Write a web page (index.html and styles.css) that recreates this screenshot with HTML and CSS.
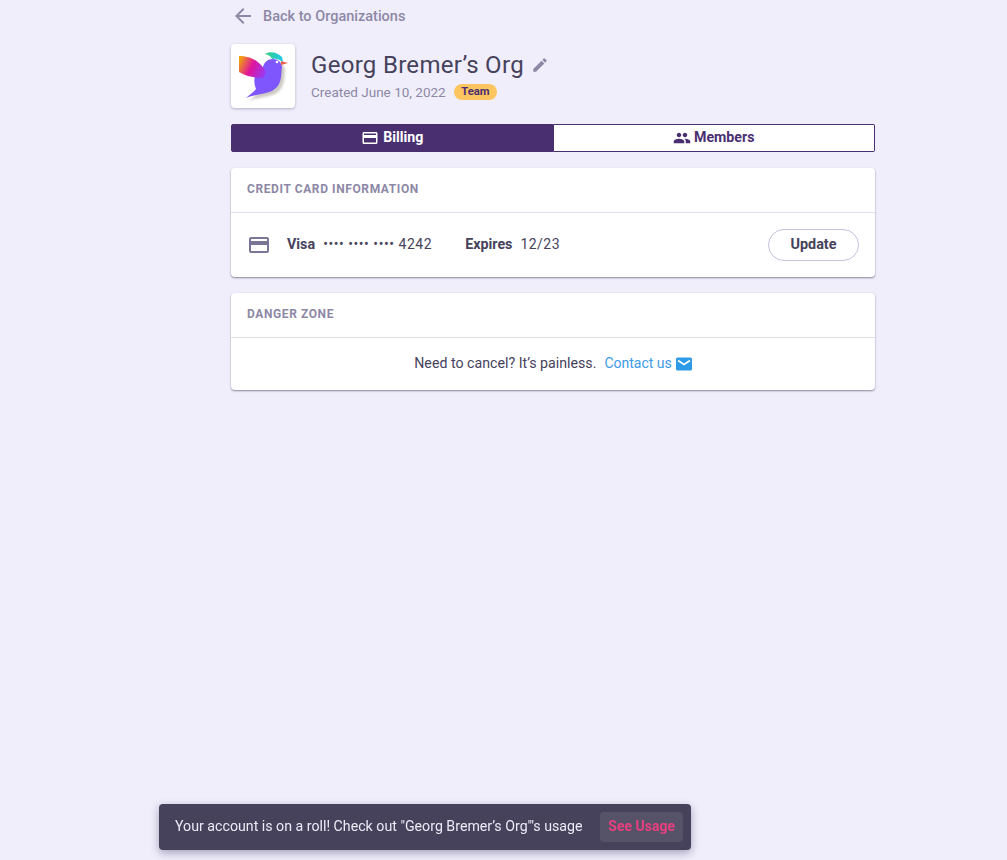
FILE: index.html
```html
<!DOCTYPE html>
<html lang="en">
<head>
    <meta charset="UTF-8">
    <title>Georg Bremer's Org</title>
    <link rel="stylesheet" href="styles.css">
</head>
<body>
    <main class="page">
        <a class="back-link" href="#">
            <svg class="back-icon" viewBox="0 0 24 24"><path d="M20 11H7.83l5.59-5.59L12 4l-8 8 8 8 1.41-1.41L7.83 13H20v-2z"/></svg>
            <span class="back-text">Back to Organizations</span>
        </a>

        <div class="org-header">
            <div class="org-logo">
                <svg viewBox="0 0 64 64" width="64" height="64">
                    <defs>
                        <linearGradient id="wing" x1="0" y1="0.2" x2="1" y2="0.6">
                            <stop offset="0" stop-color="#f2a20c"/>
                            <stop offset="0.5" stop-color="#e0149c"/>
                            <stop offset="1" stop-color="#a037ea"/>
                        </linearGradient>
                        <linearGradient id="crest" x1="0" y1="0" x2="1" y2="0">
                            <stop offset="0" stop-color="#35d07f"/>
                            <stop offset="1" stop-color="#22c8f0"/>
                        </linearGradient>
                        <filter id="soft"><feGaussianBlur stdDeviation="0.5"/></filter>
                        <filter id="shade"><feGaussianBlur stdDeviation="1.2"/></filter>
                    </defs>
                    <path d="M15 54c3-3 8-6 10-9-2-5-2-10-1-13 4-2 6-4 8-9 1-5 5-8 10-8 5 0 8 3 9 8-1 6 0 11-3 17-3 6-10 9-18 10-5 1-10 2-15 4z" fill="#cfcbc4" filter="url(#shade)" transform="translate(3 3)"/>
                    <g filter="url(#soft)">
                        <path d="M15 54c3-3 8-6 10-9-2-5-2-10-1-13 4-2 6-4 8-9 1-5 5-8 10-8 5 0 8 3 9 8-1 6 0 11-3 17-3 6-10 9-18 10-5 1-10 2-15 4z" fill="#7f55fd"/>
                        <path d="M8 12c9 0 20 3 27 16l-3 6c-9 0-17-2-24-6z" fill="url(#wing)"/>
                        <path d="M34 10c5-3 12-2 17 3l1 5c-4-3-8-4-11-3-1-3-4-4-7-5z" fill="url(#crest)"/>
                        <path d="M50 17l7 2-7 2z" fill="#f0604a"/>
                        <circle cx="46" cy="18" r="1.3" fill="#fff"/>
                    </g>
                </svg>
            </div>
            <div class="org-info">
                <h1 class="org-name">Georg Bremer’s Org
                    <svg class="edit-icon" viewBox="0 0 24 24"><path d="M3 17.25V21h3.75L17.81 9.94l-3.75-3.75L3 17.25zM20.71 7.04a1 1 0 0 0 0-1.41l-2.34-2.34a1 1 0 0 0-1.41 0l-1.83 1.83 3.75 3.75 1.83-1.83z"/></svg>
                </h1>
                <div class="org-meta">
                    <span>Created June 10, 2022</span>
                    <span class="plan-badge">Team</span>
                </div>
            </div>
        </div>

        <div class="tabs">
            <a class="tab tab-active" href="#">
                <svg class="tab-icon" viewBox="0 0 24 24"><path d="M20 4H4c-1.11 0-1.99.89-1.99 2L2 18c0 1.11.89 2 2 2h16c1.11 0 2-.89 2-2V6c0-1.11-.89-2-2-2zm0 14H4v-6h16v6zm0-10H4V6h16v2z"/></svg>
                <span class="tab-text">Billing</span>
            </a>
            <a class="tab" href="#">
                <svg class="tab-icon" viewBox="0 0 24 24"><path d="M16 11c1.66 0 2.99-1.34 2.99-3S17.66 5 16 5s-3 1.34-3 3 1.34 3 3 3zm-8 0c1.66 0 2.99-1.34 2.99-3S9.66 5 8 5 5 6.34 5 8s1.34 3 3 3zm0 2c-2.33 0-7 1.17-7 3.5V19h14v-2.5C15 14.17 10.33 13 8 13zm8 0c-.29 0-.62.02-.97.05 1.16.84 1.97 1.97 1.97 3.45V19h6v-2.5c0-2.33-4.67-3.5-7-3.5z"/></svg>
                <span class="tab-text">Members</span>
            </a>
        </div>

        <section class="card">
            <h2 class="card-title">Credit Card Information</h2>
            <div class="card-row">
                <svg class="card-icon" viewBox="0 0 24 24"><path d="M20 4H4c-1.11 0-1.99.89-1.99 2L2 18c0 1.11.89 2 2 2h16c1.11 0 2-.89 2-2V6c0-1.11-.89-2-2-2zm0 14H4v-6h16v6zm0-10H4V6h16v2z"/></svg>
                <strong class="card-brand">Visa</strong>
                <span class="card-number">•••• •••• •••• 4242</span>
                <strong class="card-brand">Expires</strong>
                <span class="card-expiry">12/23</span>
                <button class="update-btn">Update</button>
            </div>
        </section>

        <section class="card">
            <h2 class="card-title">Danger Zone</h2>
            <div class="cancel-row">
                <span class="cancel-text">Need to cancel? It’s painless.</span>
                <a class="contact-link" href="#"><span class="cancel-text">Contact us</span>
                    <svg class="mail-icon" viewBox="0 0 16 14"><rect width="16" height="13" y="0.5" rx="1.5" fill="#2e9be6"/><path d="M2 3.5l6 4 6-4" fill="none" stroke="#fff" stroke-width="1.6"/></svg>
                </a>
            </div>
        </section>
    </main>

    <div class="toast">
        <span class="toast-text">Your account is on a roll! Check out "Georg Bremer’s Org"'s usage</span>
        <button class="toast-btn">See Usage</button>
    </div>
</body>
</html>
```

FILE: styles.css
```css
* { box-sizing: border-box; }
body { margin: 0; height: 860px; overflow: hidden; background: #f0eefb; color: #46425c; font-family: "Roboto", "Liberation Sans", sans-serif; font-size: 14px; }
a { text-decoration: none; }
.page { width: 644px; margin-left: 231px; }

.back-link { display: flex; align-items: center; height: 31px; color: #8d88a6; font-size: 14.5px; font-weight: 500; }
.back-text { margin-top: 1px; }
.back-icon { width: 24px; height: 24px; margin-right: 8px; fill: #8d88a6; }

.org-header { display: flex; align-items: center; margin-top: 13px; }
.org-logo { width: 64px; height: 64px; background: #fff; border-radius: 4px; box-shadow: 0 1px 3px rgba(60, 50, 100, 0.35); }
.org-info { margin-left: 16px; padding-bottom: 3px; }
.org-name { display: flex; align-items: center; margin: 0; font-size: 24px; font-weight: 400; line-height: 32px; letter-spacing: 0.3px; }
.edit-icon { width: 18px; height: 18px; margin-left: 7px; fill: #8d88a6; }
.org-meta { display: flex; align-items: center; margin-top: 3px; color: #8d88a6; font-size: 13.5px; }
.plan-badge { margin-left: 8px; padding: 1px 7.5px; background: #fdc55f; border-radius: 8px; color: #4a2f70; font-size: 11.3px; font-weight: 700; line-height: 14px; }

.tabs { display: flex; margin-top: 16px; height: 28px; }
.tab { flex: 1; display: flex; align-items: center; justify-content: center; border: 1px solid #4a2f70; color: #4a2f70; background: #fff; font-size: 14.2px; font-weight: 700; }
.tab:last-child { border-left: none; border-radius: 0 2px 2px 0; }
.tab-active { background: #4a2f70; color: #fff; border-radius: 2px 0 0 2px; }
.tab-icon { width: 18px; height: 18px; margin-right: 3px; fill: currentColor; }
.tab-text { margin-bottom: 2px; }
.tab-active .tab-icon { margin-right: 4px; }

.card { margin-top: 16px; background: #fff; border-radius: 4px; box-shadow: 0 1px 2px rgba(50, 45, 70, 0.55); }
.card-title { margin: 0; height: 45px; padding: 0 16px; border-bottom: 1px solid #e0ddef; color: #8d88a6; font-size: 12px; font-weight: 700; line-height: 43px; letter-spacing: 0.6px; text-transform: uppercase; }

.card-row { display: flex; align-items: center; height: 64px; padding: 0 16px; }
.card-icon { width: 24px; height: 24px; margin-right: 16px; fill: #7b7695; }
.card-brand { margin-bottom: 2px; font-size: 14.3px; font-weight: 700; }
.card-number { margin: 0 33px 2px 8px; font-size: 14px; letter-spacing: 0.55px; }
.card-expiry { margin: 0 0 2px 8px; font-size: 14px; letter-spacing: 0.45px; }
.update-btn { width: 91px; height: 32px; margin-left: auto; padding-bottom: 3px; border: 1px solid #c6c1dc; border-radius: 16px; background: #fff; color: #46425c; font-family: inherit; font-size: 14.4px; font-weight: 700; }

.cancel-row { display: flex; align-items: center; justify-content: center; height: 52px; padding-bottom: 1px; font-size: 14.2px; }
.cancel-text { margin-bottom: 2px; }
.contact-link { display: flex; align-items: center; margin-left: 8px; color: #3c9be6; font-size: 14px; }
.mail-icon { width: 16px; height: 14px; margin-left: 4px; }

.toast { position: fixed; left: 159px; top: 804px; width: 532px; height: 46px; display: flex; align-items: center; justify-content: space-between; padding: 0 8px 0 16px; background: #46425c; border-radius: 4px; box-shadow: 0 3px 8px rgba(50, 45, 90, 0.4); color: #eceaf5; font-size: 14.2px; }
.toast-text { margin-bottom: 2px; }
.toast-btn { height: 30px; padding: 0 8px 2px; border: none; border-radius: 4px; background: #565268; color: #e8407f; font-family: inherit; font-size: 14px; font-weight: 700; }
```
